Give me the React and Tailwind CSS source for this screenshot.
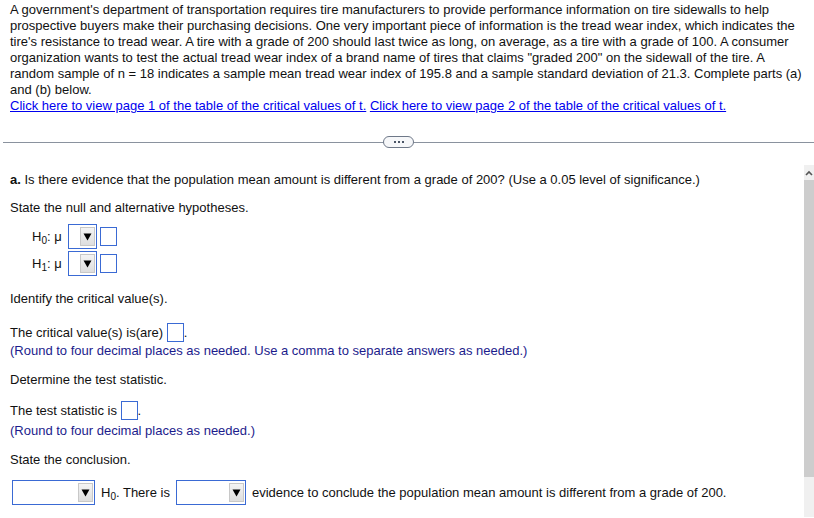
import React from 'react';

const font = { fontFamily: '"Liberation Sans", Arial, sans-serif' };

function Drop({ w }) {
  return (
    <span className={`inline-flex items-center justify-end ${w} h-[25px] border border-[#3a6ad4] bg-white pr-[1px] align-middle`}>
      <span className="flex items-center justify-center w-[15px] h-[19px] border border-[#c8c8c8] bg-gradient-to-b from-[#f4f4f4] to-[#dedede]">
        <svg width="9" height="9" viewBox="0 0 9 9">
          <path d="M0.5 1.5 H8.5 L4.5 8.5 Z" fill="#000" />
        </svg>
      </span>
    </span>
  );
}

function Box() {
  return <span className="inline-block w-[17px] h-[19px] border border-[#3a6ad4] bg-white align-middle" />;
}

function Sub({ n }) {
  return <span className="inline-block text-[10px] leading-[10px] translate-y-[4px]">{n}</span>;
}

function Hyp({ n }) {
  return (
    <div className="flex items-center h-[27px]">
      <span className="ml-[22px] w-[36px] flex items-center">
        <span>H</span>
        <Sub n={n} />
        <span>:&nbsp;μ</span>
      </span>
      <Drop w="w-[29px]" />
      <span className="ml-[3px] flex"><Box /></span>
    </div>
  );
}

export default function App() {
  return (
    <div className="w-[814px] h-[518px] overflow-hidden bg-white text-[13px] leading-[16px] text-[#111]" style={font}>
      <div className="pl-[10px] pr-[8px] pt-[2px]">
        <p>
          A government's department of transportation requires tire manufacturers to provide performance information on tire sidewalls to help
          prospective buyers make their purchasing decisions. One very important piece of information is the tread wear index, which indicates the
          tire's resistance to tread wear. A tire with a grade of 200 should last twice as long, on average, as a tire with a grade of 100. A consumer
          organization wants to test the actual tread wear index of a brand name of tires that claims "graded 200" on the sidewall of the tire. A
          random sample of n = 18 indicates a sample mean tread wear index of 195.8 and a sample standard deviation of 21.3. Complete parts (a)
          and (b) below.
        </p>
        <p>
          <a href="#" className="text-[#0000ee] underline">Click here to view page 1 of the table of the critical values of t.</a>{' '}
          <a href="#" className="text-[#0000ee] underline">Click here to view page 2 of the table of the critical values of t.</a>
        </p>
      </div>

      <div className="relative mt-[28px] ml-[3px] h-[1px] bg-[#8a929e]">
        <span className="absolute left-[380px] top-[-6px] w-[31px] h-[12px] rounded-full border border-[#6e7888] bg-[#f6f7f9] flex items-center justify-center gap-[2px]">
          <span className="w-[2px] h-[2px] bg-[#4a5566]" />
          <span className="w-[2px] h-[2px] bg-[#4a5566]" />
          <span className="w-[2px] h-[2px] bg-[#4a5566]" />
        </span>
      </div>

      <div className="flex mt-[22px] h-[352px]">
        <div className="flex-1 pl-[10px] pt-[7px]">
          <p><b>a.</b> Is there evidence that the population mean amount is different from a grade of 200? (Use a 0.05 level of significance.)</p>
          <p className="mt-[12px]">State the null and alternative hypotheses.</p>
          <div className="mt-[7px]">
            <Hyp n="0" />
            <Hyp n="1" />
          </div>
          <p className="mt-[14px]">Identify the critical value(s).</p>
          <p className="mt-[16px] flex items-center">The critical value(s) is(are)&nbsp;<Box />.</p>
          <p className="mt-[1px] text-[#1c1c8c]">(Round to four decimal places as needed. Use a comma to separate answers as needed.)</p>
          <p className="mt-[13px]">Determine the test statistic.</p>
          <p className="mt-[13px] flex items-center">The test statistic is&nbsp;<Box />.</p>
          <p className="mt-[3px] text-[#1c1c8c]">(Round to four decimal places as needed.)</p>
          <p className="mt-[13px]">State the conclusion.</p>
          <div className="mt-[12px] flex items-center pl-[2px]">
            <Drop w="w-[83px]" />
            <span className="ml-[6px] flex items-center">
              <span>H</span>
              <Sub n="0" />
              <span>. There is</span>
            </span>
            <span className="ml-[6px] flex"><Drop w="w-[70px]" /></span>
            <span className="ml-[6px]">evidence to conclude the population mean amount is different from a grade of 200.</span>
          </div>
        </div>
        <div className="w-[10px] flex flex-col bg-[#f0f0f0]">
          <div className="h-[15px] flex items-center justify-center">
            <svg width="8" height="6" viewBox="0 0 8 6">
              <path d="M1 5 L4 2 L7 5" stroke="#555" strokeWidth="1.6" fill="none" />
            </svg>
          </div>
          <div className="h-[297px] bg-[#cdcdcd]" />
        </div>
      </div>
    </div>
  );
}
